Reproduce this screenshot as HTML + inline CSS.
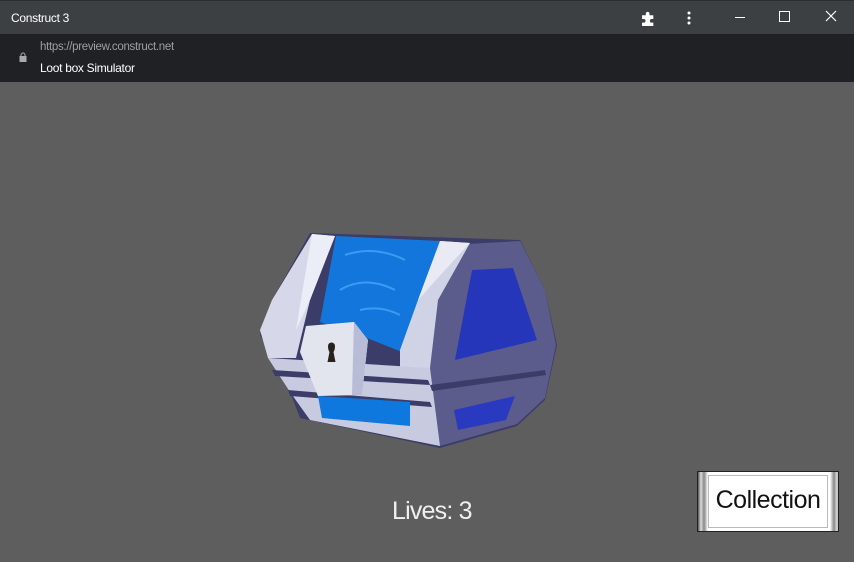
<!DOCTYPE html>
<html><head><meta charset="utf-8"><style>
body{margin:0;width:854px;height:562px;overflow:hidden;background:#5e5e5e;font-family:"Liberation Sans",sans-serif;position:relative}
.tb{position:absolute;left:0;top:0;width:854px;height:34px;background:#3c4043;border-top:1px solid #2a2c2e;box-sizing:border-box}
.tb .t{position:absolute;left:11px;top:10px;color:#fff;font-size:12px;letter-spacing:-0.3px}
.ab{position:absolute;left:0;top:34px;width:854px;height:48px;background:#202124}
.url{position:absolute;left:40px;top:7px;color:#9aa0a6;font-size:11.5px;letter-spacing:-0.3px}
.nm{position:absolute;left:40px;top:27px;color:#fff;font-size:12px;letter-spacing:-0.3px}
.lives{position:absolute;left:392px;top:497px;color:#f0f0f0;font-size:25px;font-weight:300;letter-spacing:-0.8px}
.btn{position:absolute;left:697px;top:471px;width:142px;height:61px;box-sizing:border-box;border:1px solid #222;background:linear-gradient(90deg,#555 0,#ddd 3px,#888 6px,#fff 10px,#fff 132px,#888 136px,#ddd 139px,#555 142px)}
.btn .in{position:absolute;left:10px;right:10px;top:3px;bottom:3px;background:#fff;border:1px solid #bbb}
.btn span{position:absolute;left:0;width:140px;top:14px;text-align:center;font-size:25px;font-weight:300;color:#111;letter-spacing:-0.5px}
</style></head><body>
<div class="tb"><div class="t">Construct 3</div>
<svg style="position:absolute;left:641px;top:10px" width="15" height="15" viewBox="0 0 14 14"><path d="M1 4h3.5V2.5a1.7 1.7 0 013.4 0V4h3.6v3.5h-1.5a1.7 1.7 0 000 3.4h1.5V14H1V10.9h1.5a1.7 1.7 0 000-3.4H1z" fill="#fff"/></svg>
<svg style="position:absolute;left:686px;top:10px" width="6" height="14"><circle cx="3" cy="2" r="1.5" fill="#fff"/><circle cx="3" cy="7" r="1.5" fill="#fff"/><circle cx="3" cy="12" r="1.5" fill="#fff"/></svg>
<div style="position:absolute;left:735px;top:16px;width:10px;height:1px;background:#fff"></div>
<div style="position:absolute;left:779px;top:10px;width:9px;height:9px;border:1px solid #fff"></div>
<svg style="position:absolute;left:825px;top:9px" width="12" height="12"><path d="M1 1L11 11M11 1L1 11" stroke="#fff" stroke-width="1.2"/></svg>
</div>
<div class="ab">
<svg style="position:absolute;left:19px;top:18px" width="8" height="10"><path d="M2 4V3a2 2 0 014 0v1" stroke="#aaa" fill="none"/><rect x="0.5" y="4" width="7" height="6" fill="#aaa"/></svg>
<div class="url">https://preview.construct.net</div><div class="nm">Loot box Simulator</div></div>

<svg style="position:absolute;left:0;top:0" width="854" height="562">
<polygon points="310,233 520,240 545,290 557,345 545,400 517,426 440,448 300,418 290,392 260,335 272,300" fill="#3c3c68"/>
<polygon points="432,246 520,241 545,290 556,345 545,398 517,424 440,446 425,380" fill="#5c5c8c"/>
<polygon points="472,270 513,268 537,340 455,360" fill="#2636bb"/>
<polygon points="454,410 515,396 506,420 458,430" fill="#2a3ac0"/>
<polygon points="336,236 440,241 402,352 372,340 320,322" fill="#1276dd"/>
<path d="M345,255 q30,-10 60,5 M340,290 q25,-15 55,0 M360,310 q20,-5 40,5" stroke="#3d9af0" stroke-width="2" fill="none"/>
<polygon points="312,234 335,236 310,300 296,358 268,358 260,330 272,300" fill="#d6d8ea"/>
<polygon points="312,234 335,236 310,300 296,330" fill="#eceef7"/>
<polygon points="440,241 470,243 438,300 430,368 400,368 400,350 418,300" fill="#d0d3e6"/>
<polygon points="440,241 470,243 445,270 418,300" fill="#eaeaf5"/>
<polygon points="268,358 430,368 440,446 310,420 290,392" fill="#c8cbe0"/>
<polygon points="272,370 428,380 430,385 275,376" fill="#3c3c68"/>
<polygon points="288,390 430,402 432,407 290,396" fill="#3c3c68"/>
<polygon points="430,385 545,370 546,375 432,391" fill="#3c3c68"/>
<polygon points="318,396 410,402 410,426 322,418" fill="#0f78de"/>
<polygon points="306,326 354,322 368,340 362,395 318,396 300,352" fill="#e2e4ee"/>
<polygon points="354,322 368,340 362,395 352,395" fill="#b8bcd6"/>
<path d="M328,346 a3.5,3.5 0 017,0 q0,4 -1.5,6 l2,10 h-8 l2,-10 q-1.5,-2 -1.5,-6z" fill="#2a211c"/>
</svg>
<div class="lives">Lives: 3</div>
<div class="btn"><div class="in"></div><span>Collection</span></div>
</body></html>
